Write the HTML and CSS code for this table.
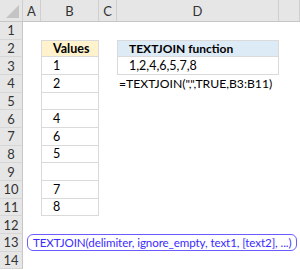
FILE: index.html
```html
<!DOCTYPE html>
<html lang="en">
<head>
<meta charset="UTF-8">
<title>TEXTJOIN</title>
<link rel="stylesheet" href="styles.css">
</head>
<body>
<div class="sheet">
  <div class="row head">
    <div class="corner"><span class="tri"></span></div>
    <div class="col">A</div>
    <div class="col">B</div>
    <div class="col">C</div>
    <div class="col">D</div>
    <div class="col"></div>
  </div>
  <div class="row"><div class="num">1</div><div></div><div></div><div></div><div></div><div></div></div>
  <div class="row"><div class="num">2</div><div></div><div class="cell tb top hdr-y">Values</div><div></div><div class="cell tb top hdr-b">TEXTJOIN function</div><div></div></div>
  <div class="row"><div class="num">3</div><div></div><div class="cell tb">1</div><div></div><div class="cell tb">1,2,4,6,5,7,8</div><div></div></div>
  <div class="row"><div class="num">4</div><div></div><div class="cell tb">2</div><div></div><div class="cell formula">=TEXTJOIN(",",TRUE,B3:B11)</div><div></div></div>
  <div class="row"><div class="num">5</div><div></div><div class="cell tb"></div><div></div><div></div><div></div></div>
  <div class="row"><div class="num">6</div><div></div><div class="cell tb">4</div><div></div><div></div><div></div></div>
  <div class="row"><div class="num">7</div><div></div><div class="cell tb">6</div><div></div><div></div><div></div></div>
  <div class="row"><div class="num">8</div><div></div><div class="cell tb">5</div><div></div><div></div><div></div></div>
  <div class="row"><div class="num">9</div><div></div><div class="cell tb"></div><div></div><div></div><div></div></div>
  <div class="row"><div class="num">10</div><div></div><div class="cell tb">7</div><div></div><div></div><div></div></div>
  <div class="row"><div class="num">11</div><div></div><div class="cell tb">8</div><div></div><div></div><div></div></div>
  <div class="row"><div class="num">12</div><div></div><div></div><div></div><div></div><div></div></div>
  <div class="row"><div class="num">13</div><div class="span">
    <div class="syntax">TEXTJOIN(delimiter, ignore_empty, text1, [text2], ...)</div>
  </div></div>
  <div class="row"><div class="num">14</div><div></div><div></div><div></div><div></div><div></div></div>
</div>
</body>
</html>
```

FILE: styles.css
```css
body {
  margin: 0;
  background: #fff;
  font-family: Lato, "Liberation Sans", sans-serif;
  font-size: 12.5px;
  color: #000;
}
.sheet {
  width: 300px;
  height: 270px;
  overflow: hidden;
}
.row {
  display: grid;
  grid-template-columns: 23px 18px 58px 18px 162px 1fr;
  height: 17.67px;
}
.row.head {
  height: 22px;
  background: #e6e6e6;
  border-bottom: 1px solid #c6c6c6;
  box-sizing: border-box;
}
.col {
  border-right: 1px solid #cfcfcf;
  display: flex;
  align-items: center;
  justify-content: center;
  color: #333;
  font-size: 13px;
}
.corner {
  position: relative;
  border-right: 1px solid #cfcfcf;
}
.tri {
  position: absolute;
  right: 3px;
  bottom: 3px;
  width: 13px;
  height: 13px;
  background: #c4c4c4;
  clip-path: polygon(100% 0, 100% 100%, 0 100%);
}
.num {
  background: #e6e6e6;
  border-right: 1px solid #c6c6c6;
  border-bottom: 1px solid #d6d6d6;
  box-sizing: border-box;
  display: flex;
  align-items: center;
  justify-content: center;
  color: #333;
  font-size: 13px;
}
.cell {
  display: flex;
  align-items: center;
  padding-left: 11px;
  white-space: nowrap;
  box-sizing: border-box;
}
.tb {
  border: 1px solid #dadada;
  border-top: none;
}
.tb.top {
  border-top: 1px solid #dadada;
}
.hdr-y {
  background: #fff2cc;
  font-weight: bold;
}
.hdr-b {
  background: #ddebf7;
  font-weight: bold;
  font-size: 12px;
}
.formula {
  padding-left: 2px;
  font-size: 12.2px;
}
.span {
  grid-column: 2 / -1;
  padding: 0 3px 0 4px;
  display: flex;
  align-items: center;
}
.syntax {
  flex: 1;
  border: 1.5px solid #6b5cff;
  border-radius: 6px;
  color: #3b2bff;
  padding: 1px 2px 1px 5px;
  white-space: nowrap;
  font-size: 11.6px;
  letter-spacing: -0.1px;
}
```
